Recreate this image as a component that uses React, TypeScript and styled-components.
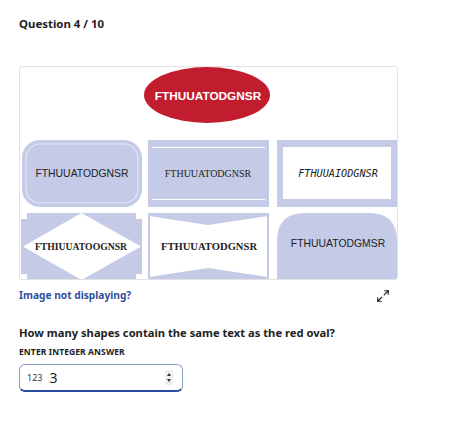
import React from "react";
import styled, { createGlobalStyle } from "styled-components";
import { Maximize2 } from "lucide-react";

const Global = createGlobalStyle`
  html, body { margin: 0; padding: 0; background: #fff; }
  body { font-family: "Noto Sans", "Open Sans", sans-serif; color: #222; }
`;

const Page = styled.div`
  width: 474px;
  height: 421px;
  box-sizing: border-box;
  padding: 15px 0 0 19px;
  display: flex;
  flex-direction: column;
`;

const Title = styled.h1`
  margin: 0;
  font-size: 11.4px;
  font-weight: 700;
  line-height: 17px;
  color: #222;
`;

const Figure = styled.div`
  margin-top: 34px;
  width: 379px;
  height: 214px;
  border: 1px solid #e2e2e2;
  border-radius: 3px;
  box-sizing: border-box;
  overflow: hidden;
  background: #fff;
`;

const FigureRow = styled.div`
  width: 379px;
  display: flex;
  justify-content: space-between;
  align-items: center;
  margin-top: 7px;
`;

const HelpLink = styled.a`
  font-size: 10.2px;
  font-weight: 700;
  color: #2f4f9e;
  text-decoration: none;
  line-height: 16px;
`;

const ExpandButton = styled.button`
  border: 0;
  background: none;
  padding: 0;
  margin-right: 8px;
  margin-top: 2px;
  display: flex;
  color: #222;
`;

const Prompt = styled.h2`
  margin: 21px 0 0;
  font-size: 11.2px;
  font-weight: 700;
  line-height: 18px;
  color: #222;
`;

const FieldLabel = styled.label`
  margin-top: 4px;
  font-size: 8.5px;
  font-weight: 700;
  letter-spacing: 0.1px;
  color: #222;
  line-height: 12px;
`;

const InputBox = styled.div`
  margin-top: 6px;
  width: 164px;
  height: 28px;
  box-sizing: border-box;
  border: 1px solid #8e9ec9;
  border-bottom: 2px solid #2a4b9b;
  border-radius: 6px;
  display: flex;
  align-items: center;
  padding: 0 9px 0 7px;
`;

const Prefix = styled.span`
  font-size: 9px;
  color: #333;
  margin-right: 7px;
`;

const Value = styled.span`
  font-size: 14px;
  color: #222;
  flex: 1;
`;

const Spinner = styled.div`
  width: 8px;
  height: 15px;
  background: #efefef;
  border-radius: 1px;
  display: flex;
  flex-direction: column;
  align-items: center;
  justify-content: space-around;
  padding: 1px 0;
  box-sizing: border-box;
`;

const Tri = styled.span<{ $down?: boolean }>`
  width: 0;
  height: 0;
  border-left: 2.5px solid transparent;
  border-right: 2.5px solid transparent;
  ${(p) =>
    p.$down
      ? "border-top: 3px solid #333;"
      : "border-bottom: 3px solid #333;"}
`;

const BLUE = "#c5cbe6";
const TXT = "#222";

function ShapesFigure() {
  return (
    <svg width="377" height="212" viewBox="0 0 377 212">
      {/* red oval */}
      <ellipse cx="187" cy="28" rx="63" ry="28" fill="#c21d2e" />
      <text x="188" y="32.5" textAnchor="middle" fill="#fff" fontFamily="Liberation Sans, Arial, sans-serif" fontWeight="700" fontSize="11.8">
        FTHUUATODGNSR
      </text>

      {/* shape 1: rounded rect */}
      <rect x="2" y="73" width="120" height="67" rx="18" fill={BLUE} />
      <rect x="6" y="77" width="112" height="59" rx="14" fill="none" stroke="#e4e7f4" strokeWidth="1.2" />
      <text x="62" y="110" textAnchor="middle" fill={TXT} fontFamily="Liberation Sans, Arial, sans-serif" fontSize="10.4">
        FTHUUATODGNSR
      </text>

      {/* shape 2: rect with lines */}
      <rect x="128" y="73" width="121" height="67" fill={BLUE} />
      <line x1="132" y1="80.5" x2="245" y2="80.5" stroke="#fff" strokeWidth="1" />
      <line x1="132" y1="132.5" x2="245" y2="132.5" stroke="#fff" strokeWidth="1" />
      <text x="188" y="110" textAnchor="middle" fill={TXT} fontFamily="Liberation Serif, Times New Roman, serif" fontSize="10">
        FTHUUATODGNSR
      </text>

      {/* shape 3: framed rect */}
      <rect x="257" y="73" width="120" height="67" fill={BLUE} />
      <rect x="263" y="80" width="108" height="52" fill="#fff" />
      <text x="318" y="110" textAnchor="middle" fill={TXT} fontFamily="DejaVu Sans Mono, monospace" fontStyle="italic" fontSize="10.2">
        FTHUUAIODGNSR
      </text>

      {/* shape 4: rect with diamond */}
      <rect x="1" y="146" width="121" height="67" fill={BLUE} />
      <rect x="1" y="146" width="6" height="6" fill="#fff" />
      <rect x="116" y="146" width="6" height="6" fill="#fff" />
      <rect x="1" y="207" width="6" height="6" fill="#fff" />
      <rect x="116" y="207" width="6" height="6" fill="#fff" />
      <polygon points="61.5,146 121,179.5 61.5,213 3,179.5" fill="#fff" />
      <text x="61" y="183" textAnchor="middle" fill={TXT} fontFamily="Liberation Serif, Times New Roman, serif" fontWeight="700" fontSize="9.7">
        FTHIUUATOOGNSR
      </text>

      {/* shape 5: bowtie */}
      <polygon points="128,146 249,146 249,148 188,157 128,148" fill={BLUE} />
      <polygon points="128,213 249,213 249,211 188,202 128,211" fill={BLUE} />
      <polygon points="129,148 188,157 248,148 248,211 188,202 129,211" fill="none" stroke={BLUE} strokeWidth="2" />
      <text x="189" y="183" textAnchor="middle" fill={TXT} fontFamily="Liberation Serif, Times New Roman, serif" fontWeight="700" fontSize="10.6">
        FTHUUATODGNSR
      </text>

      {/* shape 6: top-rounded */}
      <path d="M257 213 L257 174 Q257 146 285 146 L349 146 Q377 146 377 174 L377 213 Z" fill={BLUE} />
      <text x="318" y="180" textAnchor="middle" fill={TXT} fontFamily="Liberation Sans, Arial, sans-serif" fontSize="10.4">
        FTHUUATODGMSR
      </text>
    </svg>
  );
}

export default function App() {
  return (
    <Page>
      <Global />
      <Title>Question 4 / 10</Title>
      <Figure>
        <ShapesFigure />
      </Figure>
      <FigureRow>
        <HelpLink href="#">Image not displaying?</HelpLink>
        <ExpandButton aria-label="Expand image">
          <Maximize2 size={14} strokeWidth={2} />
        </ExpandButton>
      </FigureRow>
      <Prompt>How many shapes contain the same text as the red oval?</Prompt>
      <FieldLabel>ENTER INTEGER ANSWER</FieldLabel>
      <InputBox>
        <Prefix>123</Prefix>
        <Value>3</Value>
        <Spinner>
          <Tri />
          <Tri $down />
        </Spinner>
      </InputBox>
    </Page>
  );
}
